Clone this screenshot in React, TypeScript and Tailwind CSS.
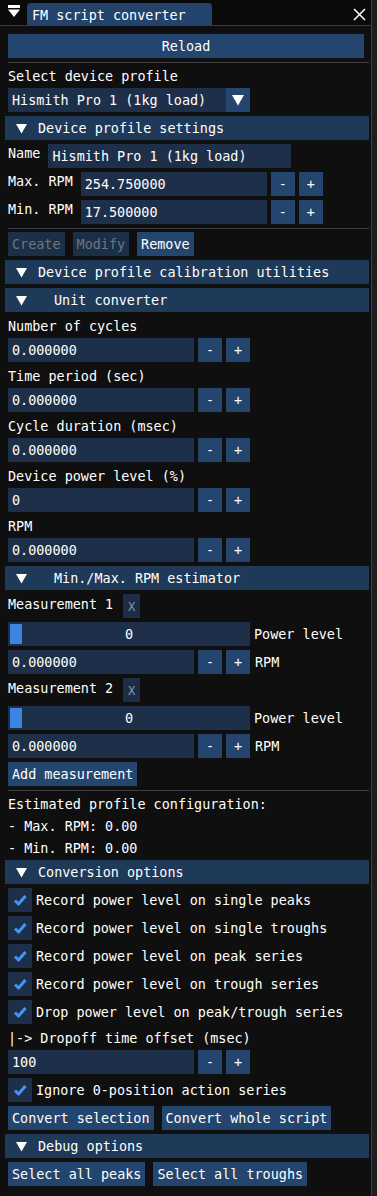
import React from "react";

// Dear ImGui dark palette, pre-blended over the window background
const FONT = { fontFamily: '"DejaVu Sans Mono", "Liberation Mono", monospace' };

const Label = ({ children }: { children: React.ReactNode }) => (
  <div className="h-[18px] leading-[21px] whitespace-pre">{children}</div>
);

const Separator = () => <div className="h-px -mb-px bg-[#3e3e47] -mr-[6px]" />;

const Btn = ({ children, disabled }: { children: React.ReactNode; disabled?: boolean }) => (
  <div
    className={
      "h-[24px] leading-[26px] px-[4px] whitespace-pre " +
      (disabled ? "bg-[#1b2f47] text-[#6f7680]" : "bg-[#24456d] text-white")
    }
  >
    {children}
  </div>
);

const SquareBtn = ({ children }: { children: React.ReactNode }) => (
  <div className="w-[24px] h-[24px] leading-[26px] text-center bg-[#24456d] text-white">{children}</div>
);

const Stepper = ({ value, suffix }: { value: string; suffix?: string }) => (
  <div className="flex gap-[4px] items-center">
    <div className="w-[186px] h-[24px] leading-[26px] px-[4px] bg-[#1d2f49]">{value}</div>
    <SquareBtn>-</SquareBtn>
    <SquareBtn>+</SquareBtn>
    {suffix && <span className="ml-px relative top-[1px]">{suffix}</span>}
  </div>
);

const Header = ({ title, nested }: { title: string; nested?: boolean }) => (
  <div className="-ml-[3px] -mr-[6px] h-[24px] bg-[#1f3958] flex items-center">
    <svg width="11" height="10" viewBox="0 0 11 10" className="ml-[11px] relative top-[1px]">
      <path d="M0 0 H11 L5.5 9.5 Z" fill="#ffffff" />
    </svg>
    <span className={"relative top-[1px] " + (nested ? "ml-[27px]" : "ml-[11px]")}>{title}</span>
  </div>
);

const Check = ({ label }: { label: string }) => (
  <div className="flex items-center gap-[4px]">
    <div className="w-[24px] h-[24px] bg-[#1d2f49] flex items-center justify-center">
      <svg width="16" height="16" viewBox="0 0 16 16">
        <path d="M3 8.5 L6.5 12 L13.5 4" stroke="#4296fa" strokeWidth="3" fill="none" strokeLinejoin="round" />
      </svg>
    </div>
    <span className="whitespace-pre relative top-[1px]">{label}</span>
  </div>
);

const Slider = () => (
  <div className="flex gap-[4px] items-center">
    <div className="w-[242px] h-[24px] bg-[#1d2f49] relative leading-[26px] text-center">
      <div className="absolute left-[2px] top-[2px] w-[12px] h-[20px] bg-[#3d85e0]" />
      <span className="relative">0</span>
    </div>
    <span className="relative top-[1px]">Power level</span>
  </div>
);

const Measurement = ({ n }: { n: number }) => (
  <div className="flex gap-[10px] h-[24px]">
    <span className="whitespace-pre h-[18px] leading-[21px]">Measurement {n}</span>
    <div className="w-[17px] h-[24px] leading-[27px] text-center bg-[#1b2d47] text-[#8c95a5] text-[12px]">X</div>
  </div>
);

export default function App() {
  return (
    <div className="w-[377px] h-[1196px] bg-[#0f0f0f] text-white text-[13.45px] flex overflow-hidden" style={FONT}>
      <div className="w-[371px] flex flex-col">
        {/* title / tab bar */}
        <div className="h-[26px] bg-[#0a0a0a] border-b border-[#2f3c50] relative flex items-end">
          <svg width="14" height="13" viewBox="0 0 14 13" className="absolute left-[7px] top-[5px]">
            <rect x="1" y="0" width="12" height="3" fill="#ffffff" />
            <path d="M1 4.5 H13 L7 12 Z" fill="#ffffff" />
          </svg>
          <div className="ml-[27px] w-[185px] h-[22px] bg-[#23436c] rounded-t-[4px] pl-[5px] leading-[25px] whitespace-pre">
            FM script converter
          </div>
          <svg width="13" height="13" viewBox="0 0 13 13" className="absolute left-[353px] top-[8px]">
            <path d="M1 1 L12 12 M12 1 L1 12" stroke="#ffffff" strokeWidth="1.5" />
          </svg>
        </div>

        <div className="px-[8px] pt-[8px] flex flex-col gap-[4px]">
          <div className="h-[24px] leading-[26px] bg-[#24456d] text-center w-[356px]">Reload</div>
          <Separator />
          <Label>Select device profile</Label>
          <div className="w-[242px] h-[24px] flex bg-[#1d2f49]">
            <div className="flex-1 leading-[26px] px-[4px] whitespace-pre">Hismith Pro 1 (1kg load)</div>
            <div className="w-[24px] bg-[#24456d] flex items-center justify-center">
              <svg width="12" height="11" viewBox="0 0 12 11">
                <path d="M0 0 H12 L6 10.5 Z" fill="#ffffff" />
              </svg>
            </div>
          </div>

          <Header title="Device profile settings" />
          <div className="flex items-center gap-[8px]">
            <span className="-mt-[4px]">Name</span>
            <div className="w-[243px] h-[24px] leading-[26px] px-[4px] bg-[#1d2f49] whitespace-pre">Hismith Pro 1 (1kg load)</div>
          </div>
          <div className="flex items-center gap-[8px]">
            <span className="-mt-[4px] whitespace-pre">Max. RPM</span>
            <Stepper value="254.750000" />
          </div>
          <div className="flex items-center gap-[8px]">
            <span className="-mt-[4px] whitespace-pre">Min. RPM</span>
            <Stepper value="17.500000" />
          </div>
          <Separator />
          <div className="flex gap-[8px]">
            <Btn disabled>Create</Btn>
            <Btn disabled>Modify</Btn>
            <Btn>Remove</Btn>
          </div>

          <Header title="Device profile calibration utilities" />
          <Header title="Unit converter" nested />
          <Label>Number of cycles</Label>
          <Stepper value="0.000000" />
          <Label>Time period (sec)</Label>
          <Stepper value="0.000000" />
          <Label>Cycle duration (msec)</Label>
          <Stepper value="0.000000" />
          <Label>Device power level (%)</Label>
          <Stepper value="0" />
          <Label>RPM</Label>
          <Stepper value="0.000000" />

          <Header title="Min./Max. RPM estimator" nested />
          <Measurement n={1} />
          <Slider />
          <Stepper value="0.000000" suffix="RPM" />
          <Measurement n={2} />
          <Slider />
          <Stepper value="0.000000" suffix="RPM" />
          <div className="flex">
            <Btn>Add measurement</Btn>
          </div>
          <Separator />
          <Label>Estimated profile configuration:</Label>
          <Label>- Max. RPM: 0.00</Label>
          <Label>- Min. RPM: 0.00</Label>

          <Header title="Conversion options" />
          <Check label="Record power level on single peaks" />
          <Check label="Record power level on single troughs" />
          <Check label="Record power level on peak series" />
          <Check label="Record power level on trough series" />
          <Check label="Drop power level on peak/trough series" />
          <Label>|-&gt; Dropoff time offset (msec)</Label>
          <Stepper value="100" />
          <Check label="Ignore 0-position action series" />
          <div className="flex gap-[8px]">
            <Btn>Convert selection</Btn>
            <Btn>Convert whole script</Btn>
          </div>

          <Header title="Debug options" />
          <div className="flex gap-[8px]">
            <Btn>Select all peaks</Btn>
            <Btn>Select all troughs</Btn>
          </div>
        </div>
      </div>
      {/* window border + outside strip */}
      <div className="w-px bg-[#3e3e47]" />
      <div className="flex-1 bg-[#1e1e1e]" />
    </div>
  );
}
